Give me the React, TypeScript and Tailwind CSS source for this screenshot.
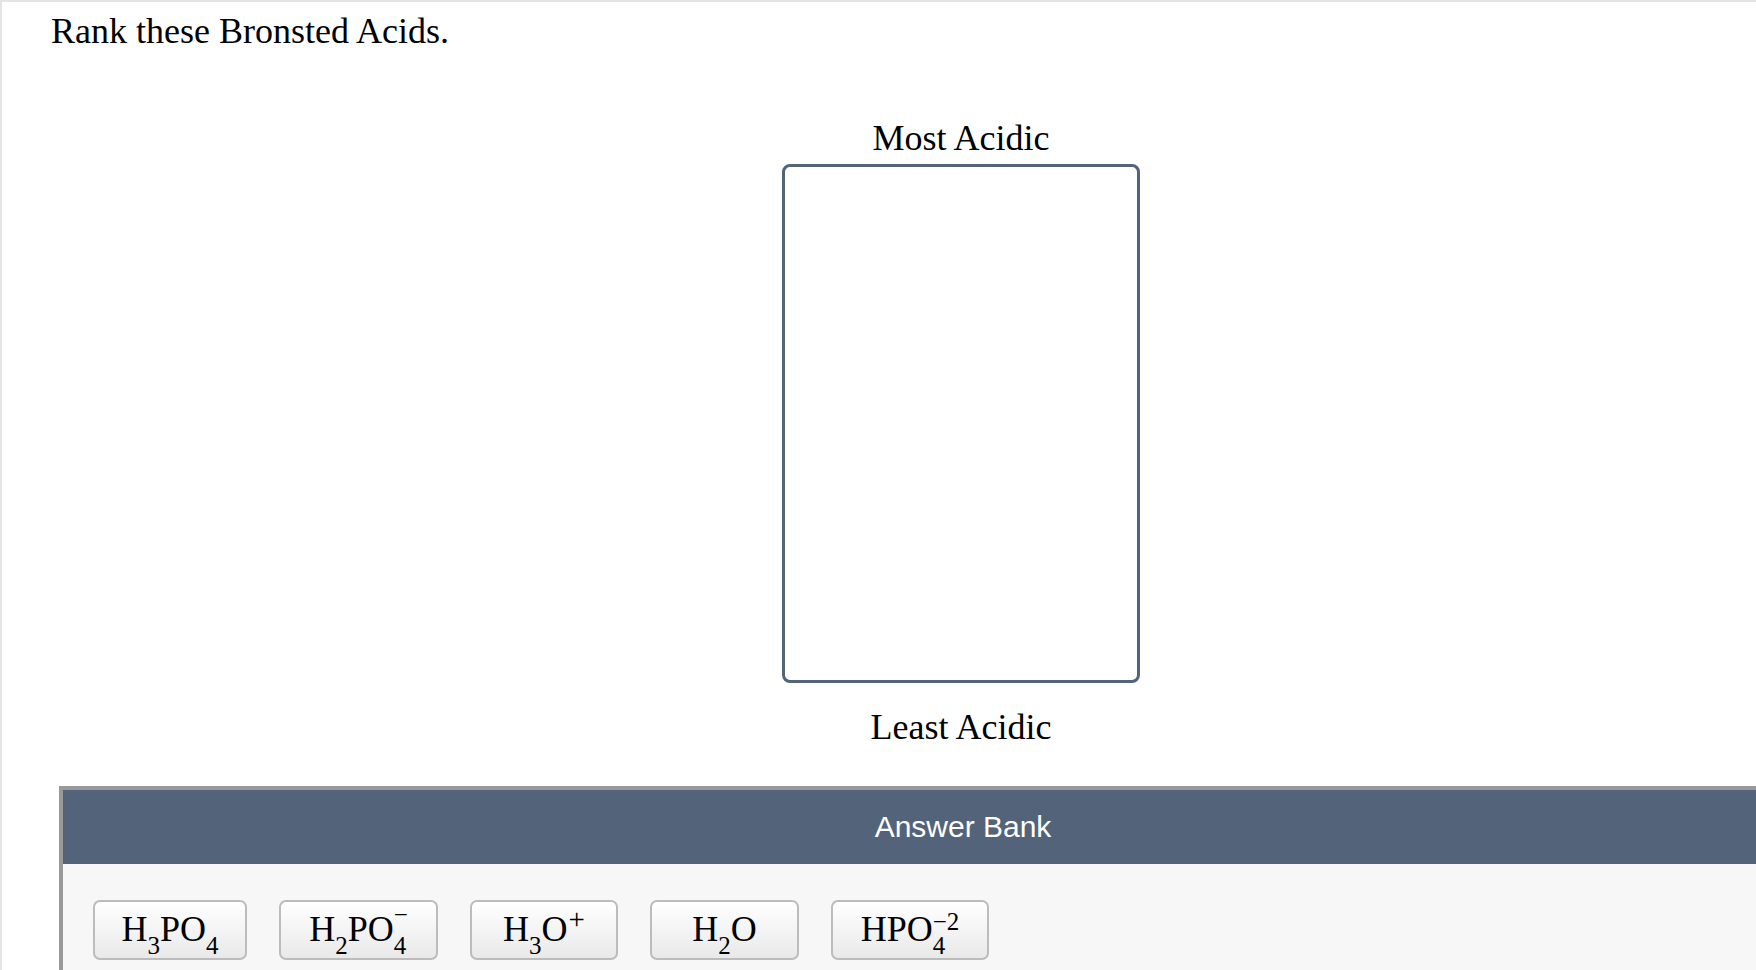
import type { ReactNode } from 'react'

const serif = { fontFamily: '"Liberation Serif", "Times New Roman", serif' }

function Sub({ children }: { children: ReactNode }) {
  return <span className="text-[25px] leading-[0] align-[-13px]">{children}</span>
}

function Sup({ children }: { children: ReactNode }) {
  return <span className="ml-[1px] text-[29px] leading-[0] align-[12px]">{children}</span>
}

// sup stacked over sub, like msubsup
function SubSup({ sub, sup, raise }: { sub: string; sup: string; raise: 'hi' | 'lo' }) {
  return (
    <span
      className={
        raise === 'hi'
          ? 'inline-flex flex-col items-start gap-[31px] text-[25px] leading-[0] align-[18px]'
          : 'inline-flex flex-col items-start gap-[24px] text-[25px] leading-[0] align-[11px]'
      }
    >
      <span>{sup}</span>
      <span>{sub}</span>
    </span>
  )
}

function Chip({ width, children }: { width: string; children: ReactNode }) {
  return (
    <div
      className={`${width} h-[60px] shrink-0 rounded-[7px] border-2 border-[#bcbcbc] bg-linear-to-b from-white to-[#e9e9e9] pt-[9px] text-center`}
    >
      <div className="text-[36px] leading-[36px] text-black whitespace-nowrap" style={serif}>
        {children}
      </div>
    </div>
  )
}

export default function App() {
  return (
    <div className="w-screen h-[970px] overflow-hidden bg-white border-t-2 border-l-2 border-[#e4e4e4]">
      <div className="w-[1918px]">
        {/* question */}
        <h1 className="pl-[49px] pt-[9px] text-[36px] leading-[40px] text-black" style={serif}>
          Rank these Bronsted Acids.
        </h1>

        {/* ranking target */}
        <div className="flex flex-col items-center">
          <p className="mt-[67px] text-[36px] leading-[40px] text-black" style={serif}>
            Most Acidic
          </p>
          <div className="mt-[6px] w-[358px] h-[519px] rounded-[8px] border-[3px] border-[#536379] bg-white" />
          <p className="mt-[24px] text-[36px] leading-[40px] text-black" style={serif}>
            Least Acidic
          </p>
        </div>

        {/* answer bank */}
        <div className="mt-[39px] ml-[57px] w-[1804px] h-[300px] border-t-4 border-l-4 border-[#999999] bg-[#f7f7f7]">
          <div
            className="h-[74px] flex items-center justify-center bg-[#536379] text-white text-[30px] leading-none"
            style={{ fontFamily: '"Liberation Sans", Arial, sans-serif' }}
          >
            Answer Bank
          </div>
          <div className="flex gap-[32px] pl-[30px] pt-[36px]">
            <Chip width="w-[154px]">
              H<Sub>3</Sub>PO<Sub>4</Sub>
            </Chip>
            <Chip width="w-[159px]">
              H<Sub>2</Sub>PO<SubSup sub="4" sup="−" raise="hi" />
            </Chip>
            <Chip width="w-[148px]">
              H<Sub>3</Sub>O<Sup>+</Sup>
            </Chip>
            <Chip width="w-[149px]">
              H<Sub>2</Sub>O
            </Chip>
            <Chip width="w-[158px]">
              HPO<SubSup sub="4" sup="−2" raise="lo" />
            </Chip>
          </div>
        </div>
      </div>
    </div>
  )
}
